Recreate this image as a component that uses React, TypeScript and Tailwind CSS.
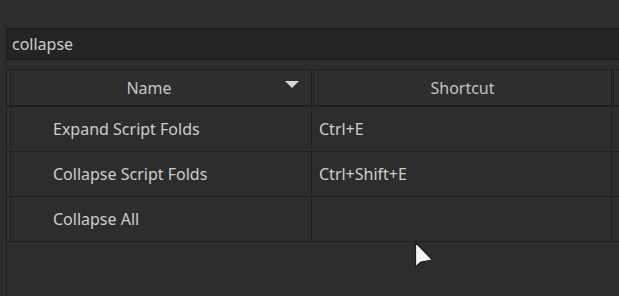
import React from "react";

const rows = [
  { name: "Expand Script Folds", shortcut: "Ctrl+E" },
  { name: "Collapse Script Folds", shortcut: "Ctrl+Shift+E" },
  { name: "Collapse All", shortcut: "" },
];

export default function App() {
  return (
    <div
      className="relative w-[619px] h-[296px] overflow-hidden bg-[#2d2d2d] text-[#cdcdcd]"
      style={{ fontFamily: '"Noto Sans", "Open Sans", sans-serif' }}
    >
      <div className="pt-[28px] pl-[6px]">
        <div className="h-[32px] border-y-[2px] border-l-[2px] border-[#1f1f1f] bg-[#242424] flex items-center pl-[4px] text-[16px]">
          collapse
        </div>
      </div>
      <div className="ml-[6px] mt-[9px] h-[300px] border-l border-t border-[#1f1f1f] bg-[#2d2d2d]">
        {/* header */}
        <div className="flex h-[37px] border-b-[2px] border-[#1f1f1f] bg-[#2e2e2e]">
          <div className="w-[6px] h-full flex">
            <div className="w-[4px] h-full bg-[#333333] border-r border-[#1f1f1f]" />
          </div>
          <div className="w-[299px] relative flex items-center border-r border-[#1f1f1f] text-[#c4c4c4] text-[16px]">
            <div className="w-[272px] text-center pt-[1px]">Name</div>
            <svg className="absolute left-[272px] top-[11px]" width="14" height="8" viewBox="0 0 14 8">
              <path d="M0 0 H14 L7 7 Z" fill="#d8d8d8" />
            </svg>
          </div>
          <div className="w-[1px]" />
          <div className="w-[299px] flex items-center justify-center pt-[1px] border-l border-r border-[#1f1f1f] text-[#c4c4c4] text-[16px]">
            Shortcut
          </div>
          <div className="flex-1 ml-[1px] border-l border-[#1f1f1f]" />
        </div>
        {rows.map((r) => (
          <div key={r.name} className="flex h-[45px] border-b border-[#1f1f1f] text-[16px]">
            <div className="w-[6px] h-full flex">
              <div className="w-[4px] h-full bg-[#333333] border-r border-[#1f1f1f]" />
            </div>
            <div className="w-[299px] flex items-center pl-[40px] border-r border-[#1f1f1f]">
              {r.name}
            </div>
            <div className="w-[300px] flex items-center pl-[7px] border-r border-[#1f1f1f]">
              {r.shortcut}
            </div>
            <div className="flex-1" />
          </div>
        ))}
      </div>
      <svg
        className="absolute left-[414px] top-[241px]"
        width="20"
        height="28"
        viewBox="0 0 20 28"
      >
        <path d="M1.5 1.5 L1.5 26 L7 21 L18.5 19 Z" fill="#f4f4f4" stroke="#1a1a2a" strokeWidth="1.2" strokeLinejoin="round" />
      </svg>
    </div>
  );
}
